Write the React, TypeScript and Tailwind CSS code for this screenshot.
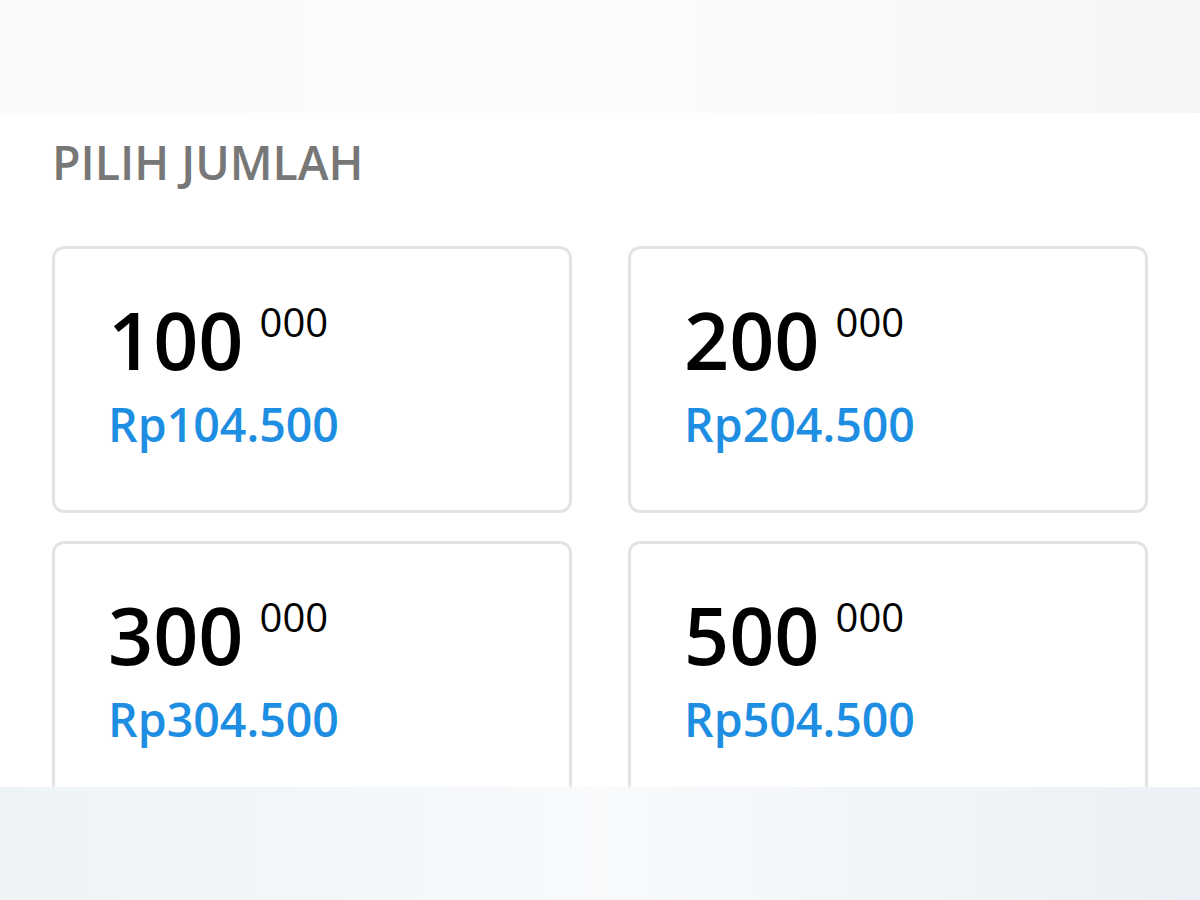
const options = [
  { amount: '100', price: 'Rp104.500' },
  { amount: '200', price: 'Rp204.500' },
  { amount: '300', price: 'Rp304.500' },
  { amount: '500', price: 'Rp504.500' },
]

function AmountCard({ amount, price }: { amount: string; price: string }) {
  return (
    <button className="flex h-[267px] flex-col items-start rounded-[12px] border-[3px] border-[#e4e4e4] bg-white px-[53px] pt-[42px] text-left">
      <div className="flex items-start text-black">
        <span className="text-[79px] font-semibold leading-[1.25]">{amount}</span>
        <span className="ml-[16px] mt-[6px] text-[40px] leading-[1.25]">000</span>
      </div>
      <div className="mt-[7px] text-[46.5px] font-semibold leading-[1.2] text-[#1e8ee2]">{price}</div>
    </button>
  )
}

export default function App() {
  return (
    <div className="flex h-[900px] w-[1200px] flex-col overflow-hidden bg-white font-['Open_Sans',sans-serif]">
      <div className="h-[113px] shrink-0 bg-gradient-to-r from-[#f9fafb] via-[#fbfcfc] to-[#f5f6f7]" />
      <div className="flex-1 overflow-hidden px-[52px] pt-[19px]">
        <h2 className="text-[46.5px] font-semibold leading-[1.3] text-[#777777]">PILIH JUMLAH</h2>
        <div className="mt-[54px] grid grid-cols-2 gap-x-[56px] gap-y-[28px]">
          {options.map((o) => (
            <AmountCard key={o.amount} {...o} />
          ))}
        </div>
      </div>
      <div className="h-[113px] shrink-0 bg-gradient-to-r from-[#eef3f6] via-[#f8fafc] to-[#ecf0f4]" />
    </div>
  )
}
